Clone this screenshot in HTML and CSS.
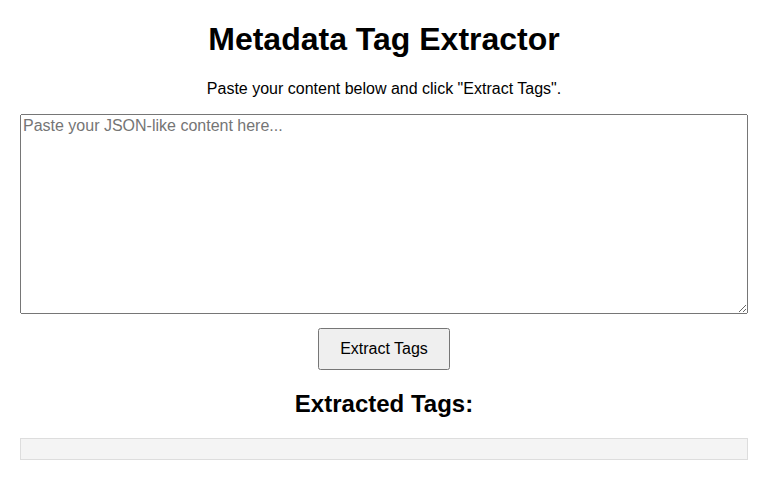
FILE: index.html
```
<!DOCTYPE html>
<html lang="en">
<head>
<meta charset="utf-8">
<title>Metadata Tag Extractor</title>
<link rel="stylesheet" href="styles.css">
</head>
<body>
<h1 class="title">Metadata Tag Extractor</h1>
<p class="intro">Paste your content below and click "Extract Tags".</p>
<textarea class="input" placeholder="Paste your JSON-like content here..."></textarea>
<div class="actions"><button class="extract-btn" type="button">Extract Tags</button></div>
<h2 class="subtitle">Extracted Tags:</h2>
<div class="output"></div>
</body>
</html>
```
FILE: styles.css
```
html {
  margin: 0;
  padding: 0;
}
body {
  margin: 0 20px;
  padding: 0;
  font-family: "Liberation Sans", Arial, sans-serif;
  color: #000;
  background: #fff;
}
.title {
  text-align: center;
  font-size: 32px;
  margin: 21.44px 0;
}
.intro {
  text-align: center;
  font-size: 16px;
  margin: 16px 0;
}
.input {
  display: block;
  width: 100%;
  height: 200px;
  box-sizing: border-box;
  font-family: "Liberation Sans", Arial, sans-serif;
  font-size: 16px;
  margin: 0 0 14px 0;
}
.actions {
  text-align: center;
}
.extract-btn {
  font-family: "Liberation Sans", Arial, sans-serif;
  font-size: 16px;
  padding: 10px 20px;
}
.subtitle {
  text-align: center;
  font-size: 24px;
  margin: 19.92px 0;
}
.output {
  padding: 10px;
  border: 1px solid #dddddd;
  background: #f4f4f4;
}
```
